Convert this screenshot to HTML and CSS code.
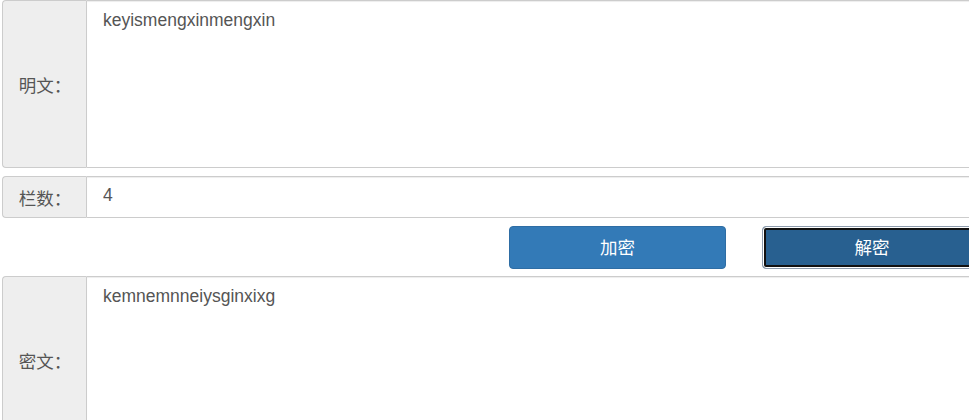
FILE: index.html
```html
<!DOCTYPE html>
<html lang="zh-CN">
<head>
<meta charset="utf-8">
<title>栅栏密码</title>
<link rel="stylesheet" href="styles.css">
</head>
<body>
<div class="page">
  <div class="group group-tall">
    <span class="addon">明文：</span>
    <textarea class="control area">keyismengxinmengxin</textarea>
  </div>
  <div class="group group-line">
    <span class="addon">栏数：</span>
    <input class="control line" type="text" value="4">
  </div>
  <div class="actions">
    <button class="btn" type="button">加密</button>
    <button class="btn btn-active" type="button">解密</button>
  </div>
  <div class="group group-tall">
    <span class="addon">密文：</span>
    <textarea class="control area">kemnemnneiysginxixg</textarea>
  </div>
</div>
</body>
</html>
```
FILE: styles.css
```css
html, body {
  margin: 0;
  padding: 0;
  overflow: hidden;
  background: #fff;
}

.page {
  margin-left: 2px;
  width: 1010px;
  font-family: "Liberation Sans", "Noto Sans CJK SC", sans-serif;
  font-size: 17.5px;
  color: #555;
}

.group {
  display: flex;
  width: 100%;
}

.group-tall {
  height: 168px;
  margin-bottom: 8px;
}

.group-line {
  height: 42px;
  margin-bottom: 8px;
}

.addon {
  box-sizing: border-box;
  flex: none;
  width: 84px;
  display: flex;
  align-items: center;
  justify-content: center;
  background: #eee;
  border: 1px solid #ccc;
  border-right: 0;
  border-radius: 4px 0 0 4px;
  color: #555;
  font-family: "Liberation Sans", "Noto Sans CJK SC", sans-serif;
  font-size: 17.5px;
  white-space: nowrap;
  padding-left: 1px;
}

.control {
  box-sizing: border-box;
  flex: 1;
  min-width: 0;
  margin: 0;
  border: 1px solid #ccc;
  border-radius: 0 4px 4px 0;
  box-shadow: inset 0 1px 1px rgba(0, 0, 0, .075);
  background: #fff;
  color: #555;
  font-family: "Liberation Sans", "Noto Sans CJK SC", sans-serif;
  font-size: 17.5px;
  outline: none;
}

.area {
  height: 100%;
  resize: none;
  overflow: hidden;
  padding: 6px 16px;
  line-height: 1.5;
}

.line {
  height: 100%;
  padding: 0 16px 4px 16px;
}

.actions {
  display: flex;
  gap: 36px;
  padding-left: 507px;
  margin-bottom: 7px;
}

.btn {
  box-sizing: border-box;
  width: 217px;
  height: 43px;
  margin: 0;
  padding: 0 0 2px 0;
  border: 1px solid #2e6da4;
  border-radius: 4px;
  background: #337ab7;
  color: #fff;
  font-family: "Liberation Sans", "Noto Sans CJK SC", sans-serif;
  font-size: 17.5px;
  cursor: pointer;
}

.btn-active {
  width: 220px;
  background: #286090;
  border-color: #8e9cad;
  box-shadow: inset 0 0 0 1px #fff, inset 0 0 0 3px #111;
}
```
